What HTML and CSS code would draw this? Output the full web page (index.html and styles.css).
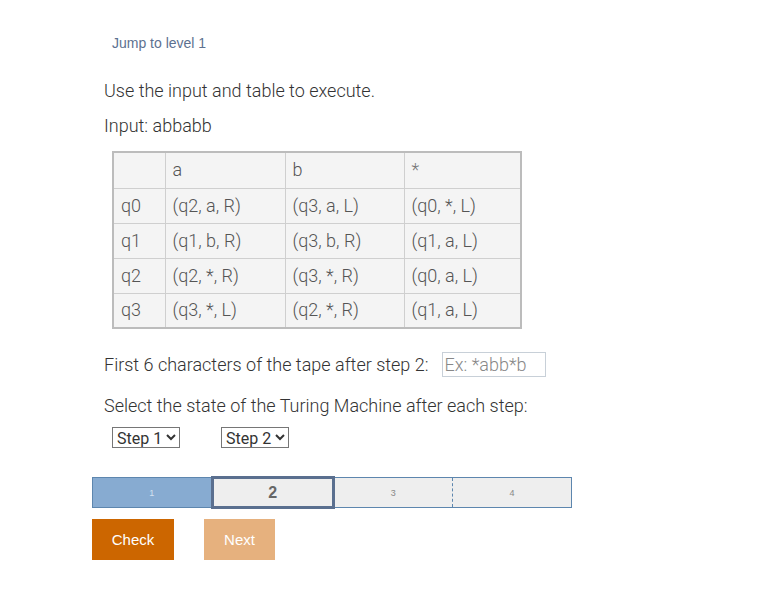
FILE: index.html
```html
<!DOCTYPE html>
<html>
<head>
<meta charset="utf-8">
<link rel="stylesheet" href="styles.css">
</head>
<body>
<div class="page">
  <div class="jump">Jump to level 1</div>
  <div class="content">
    <p class="line first">Use the input and table to execute.</p>
    <p class="line">Input: abbabb</p>
    <table class="tm">
      <colgroup><col class="c0"><col class="c1"><col class="c2"><col class="c3"></colgroup>
      <tr><td></td><td>a</td><td>b</td><td class="star">*</td></tr>
      <tr><td>q0</td><td>(q2, a, R)</td><td>(q3, a, L)</td><td>(q0, *, L)</td></tr>
      <tr><td>q1</td><td>(q1, b, R)</td><td>(q3, b, R)</td><td>(q1, a, L)</td></tr>
      <tr><td>q2</td><td>(q2, *, R)</td><td>(q3, *, R)</td><td>(q0, a, L)</td></tr>
      <tr><td>q3</td><td>(q3, *, L)</td><td>(q2, *, R)</td><td>(q1, a, L)</td></tr>
    </table>
    <div class="tape-row">
      <span>First 6 characters of the tape after step 2:</span>
      <input class="tape" type="text" placeholder="Ex: *abb*b">
    </div>
    <p class="line select-label">Select the state of the Turing Machine after each step:</p>
    <div class="selects">
      <select class="sel"><option>Step 1</option></select>
      <select class="sel"><option>Step 2</option></select>
    </div>
  </div>
  <div class="progress">
    <div class="seg done">1</div>
    <div class="seg current">2</div>
    <div class="seg dashed">3</div>
    <div class="seg">4</div>
  </div>
  <div class="buttons">
    <button class="btn check">Check</button>
    <button class="btn next">Next</button>
  </div>
</div>
</body>
</html>
```
FILE: styles.css
```css
html, body {
  margin: 0;
  padding: 0;
  background: #fff;
}
.page {
  padding: 34px 0 0 92px;
  font-family: Roboto, "Noto Sans", sans-serif;
}
.jump {
  font-family: "Liberation Sans", Arial, sans-serif;
  font-size: 14px;
  color: #5d7190;
  padding-left: 20px;
  line-height: 18px;
}
.content {
  padding-left: 12px;
  color: #333;
  font-weight: 300;
  font-size: 18px;
}
.line {
  margin: 0;
  line-height: 22px;
}
.first {
  margin-top: 28px;
}
.line + .line {
  margin-top: 13px;
}
.tm {
  margin: 14px 0 0 8px;
  border-collapse: collapse;
  border: 2px solid #bcbcbc;
  background: #f4f4f4;
  color: #555;
  width: 410px;
  table-layout: fixed;
}
.c0 { width: 52px; }
.c1 { width: 120px; }
.c2 { width: 119px; }
.c3 { width: 117px; }
.tm td {
  border: 1px solid #cfcfcf;
  height: 35px;
  padding: 0 0 0 7px;
  box-sizing: border-box;
  line-height: 20px;
  vertical-align: middle;
}
.tm tr:first-child td {
  height: 36px;
}
.tm .star {
  color: #777;
}
.tape-row {
  margin-top: 23px;
  display: flex;
  align-items: center;
  gap: 13px;
  line-height: 22px;
}
.tape {
  width: 104px;
  height: 25px;
  box-sizing: border-box;
  border: 1px solid #c8d0d8;
  font-family: Roboto, sans-serif;
  font-weight: 300;
  font-size: 18px;
  padding: 0 0 0 2px;
  color: #333;
  outline: none;
}
.tape::placeholder {
  color: #888;
}
.select-label {
  margin-top: 18px;
}
.selects {
  display: flex;
  gap: 41px;
  padding-left: 8px;
  margin-top: 10px;
}
.sel {
  height: 21px;
  font-family: Roboto, sans-serif;
  font-weight: 400;
  font-size: 16px;
  color: #333;
  border: 1px solid #767676;
  border-radius: 0;
  background: #fff;
  padding: 0;
}
.progress {
  margin-top: 29px;
  display: flex;
  width: 480px;
  height: 31px;
  box-sizing: border-box;
  border: 1px solid #5d86ae;
  background: #eeeeee;
  font-family: "Liberation Sans", Arial, sans-serif;
  font-size: 9px;
  color: #888;
}
.seg {
  flex: 1;
  display: flex;
  align-items: center;
  justify-content: center;
}
.seg.done {
  background: #87abd1;
  color: #d4e2f0;
}
.seg.current {
  border: 3px solid #5a6f8f;
  margin: -2px 0;
  font-size: 16px;
  font-weight: bold;
  color: #666;
}
.seg.dashed {
  border-right: 1px dashed #5d86ae;
}
.buttons {
  margin-top: 11px;
  display: flex;
  gap: 30px;
}
.btn {
  height: 41px;
  border: none;
  color: #fff;
  font-family: "Liberation Sans", Arial, sans-serif;
  font-size: 15px;
  padding: 0;
}
.check {
  width: 82px;
  background: #cc6600;
}
.next {
  width: 71px;
  background: #e6b17e;
}
```
